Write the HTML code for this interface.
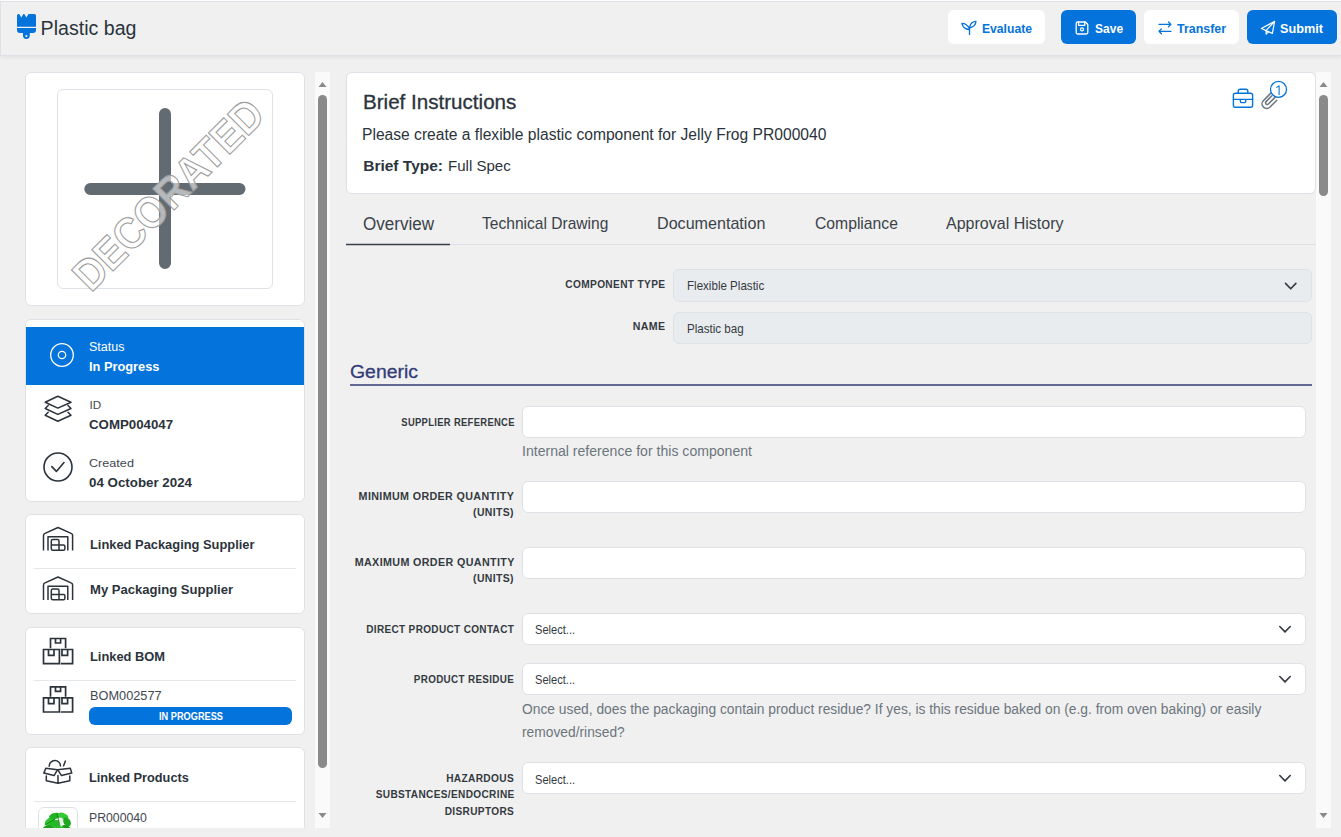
<!DOCTYPE html>
<html><head><meta charset="utf-8"><title>Plastic bag</title>
<style>
html,body{margin:0;padding:0;}
body{width:1341px;height:837px;overflow:hidden;position:relative;background:#f0f0f0;font-family:"Liberation Sans", sans-serif;}
.t{position:absolute;line-height:1;white-space:nowrap;font-family:"Liberation Sans", sans-serif;}
svg{overflow:visible}
</style></head><body>
<div style="position:absolute;left:0px;top:0px;width:1341px;height:1px;box-sizing:border-box;background:#fcfcfd"></div>
<div style="position:absolute;left:0px;top:1px;width:1341px;height:55px;box-sizing:border-box;background:#f0f0f0;border-top:1px solid #dee2e6;border-left:1px solid #dee2e6;border-bottom:1px solid #dee2e6;box-shadow:0 2px 3px rgba(0,0,0,0.05)"></div>
<svg style="position:absolute;left:0;top:0;" width="1341" height="837" viewBox="0 0 1341 837" fill="#0473db" stroke="none" stroke-width="0" stroke-linecap="round" stroke-linejoin="round"><path d="M17 15.6 Q17 14 18.6 14 L19.2 14 L21.3 17.6 L23.4 14 L24.3 14 L26.4 17.6 L28.5 14 L34.4 14 Q36 14 36 15.6 L36 26.7 L17 26.7 Z"/><path fill-rule="evenodd" d="M17 28 L36 28 L36 30 Q36 33 33 33 L29.8 33 L29.8 35.6 A3.4 3.4 0 0 1 23 35.6 L23 33 L20 33 Q17 33 17 30 Z M26.4 34.9 A1.1 1.1 0 1 0 26.4 37.1 A1.1 1.1 0 1 0 26.4 34.9 Z"/></svg>
<div class="t" style="left:40.6px;top:19px;font-size:19.6px;font-weight:400;color:#2b333b;">Plastic bag</div>
<div style="position:absolute;left:948px;top:10px;width:97px;height:34px;box-sizing:border-box;background:#fff;border-radius:6px"></div>
<div style="position:absolute;left:1061px;top:10px;width:75px;height:34px;box-sizing:border-box;background:#0473db;border-radius:6px"></div>
<div style="position:absolute;left:1144px;top:10px;width:95px;height:34px;box-sizing:border-box;background:#fff;border-radius:6px"></div>
<div style="position:absolute;left:1247px;top:10px;width:90px;height:34px;box-sizing:border-box;background:#0473db;border-radius:6px"></div>
<div class="t" style="left:981.8px;top:22px;font-size:13.5px;font-weight:700;color:#0473db;transform:scaleX(0.9);transform-origin:left top;">Evaluate</div>
<div class="t" style="left:1094.7px;top:22px;font-size:13.5px;font-weight:700;color:#fff;transform:scaleX(0.89);transform-origin:left top;">Save</div>
<div class="t" style="left:1177px;top:22px;font-size:13.5px;font-weight:700;color:#0473db;transform:scaleX(0.92);transform-origin:left top;">Transfer</div>
<div class="t" style="left:1280.4px;top:22px;font-size:13.5px;font-weight:700;color:#fff;transform:scaleX(0.94);transform-origin:left top;">Submit</div>
<svg style="position:absolute;left:0;top:0;" width="1341" height="837" viewBox="0 0 1341 837" fill="none" stroke="#0473db" stroke-width="1.3" stroke-linecap="round" stroke-linejoin="round"><path d="M969.5 34.5 L969.5 27.5"/><path d="M969.5 28.5 Q966.5 23.2 962 23.3 Q962.8 29 969.5 29.5"/><path d="M969.8 26.5 Q971 21.5 976 21.3 Q975.6 26.5 970.5 27.5"/></svg>
<svg style="position:absolute;left:0;top:0;" width="1341" height="837" viewBox="0 0 1341 837" fill="none" stroke="#fff" stroke-width="1.3" stroke-linecap="round" stroke-linejoin="round"><path d="M1077.7 22 L1085.5 22 L1087.8 24.5 L1087.8 32.5 Q1087.8 34 1086.3 34 L1077.7 34 Q1076.2 34 1076.2 32.5 L1076.2 23.5 Q1076.2 22 1077.7 22 Z"/><path d="M1078.6 22 L1078.6 25.3 L1084.8 25.3 L1084.8 22"/><circle cx="1082" cy="29.4" r="1.5"/></svg>
<svg style="position:absolute;left:0;top:0;" width="1341" height="837" viewBox="0 0 1341 837" fill="none" stroke="#0473db" stroke-width="1.3" stroke-linecap="round" stroke-linejoin="round"><path d="M1159 24.4 L1170.9 24.4 M1168.5 22 L1170.9 24.4 L1168.5 26.8"/><path d="M1171 31.3 L1159 31.3 M1161.4 28.9 L1159 31.3 L1161.4 33.7"/></svg>
<svg style="position:absolute;left:0;top:0;" width="1341" height="837" viewBox="0 0 1341 837" fill="none" stroke="#fff" stroke-width="1.2" stroke-linecap="round" stroke-linejoin="round"><path d="M1274.6 21.3 L1261.4 28.5 L1266 30.6 L1272.4 33.4 Z M1274.6 21.3 L1266 30.6 L1266.2 34.2 L1268.4 31.8"/></svg>
<div style="position:absolute;left:0;top:72px;width:315px;height:756px;overflow:hidden">
<div style="position:absolute;left:25px;top:0px;width:280px;height:234px;box-sizing:border-box;background:#fff;border:1px solid #dee2e6;border-radius:6px"></div>
<div style="position:absolute;left:25px;top:247px;width:280px;height:183px;box-sizing:border-box;background:#fff;border:1px solid #dee2e6;border-radius:6px"></div>
<div style="position:absolute;left:25px;top:442px;width:280px;height:100px;box-sizing:border-box;background:#fff;border:1px solid #dee2e6;border-radius:6px"></div>
<div style="position:absolute;left:25px;top:555px;width:280px;height:108px;box-sizing:border-box;background:#fff;border:1px solid #dee2e6;border-radius:6px"></div>
<div style="position:absolute;left:25px;top:675px;width:280px;height:200px;box-sizing:border-box;background:#fff;border:1px solid #dee2e6;border-radius:6px"></div>
</div>
<div style="position:absolute;left:57px;top:89px;width:216px;height:200px;box-sizing:border-box;border:1px solid #dee2e6;border-radius:6px;background:#fff"></div>
<svg style="position:absolute;left:0;top:0;" width="1341" height="837" viewBox="0 0 1341 837" fill="none" stroke="#626a72" stroke-width="12" stroke-linecap="round" stroke-linejoin="round"><path d="M165 114 L165 263 M90.3 189 L239.5 189"/></svg>
<div style="position:absolute;left:57px;top:89px;width:216px;height:200px;border-radius:6px"><div style="position:absolute;left:108px;top:100px;width:0;height:0"><div style="position:absolute;left:-200px;top:-40px;width:400px;height:80px;line-height:80px;text-align:center;font-family:'Liberation Sans',sans-serif;font-weight:700;font-size:44px;color:rgba(255,255,255,0.55);-webkit-text-stroke:1.1px #9c9c9c;transform:translate(3.4px,5.6px) rotate(-45deg) scaleX(0.905);white-space:nowrap">DECORATED</div></div></div>
<div style="position:absolute;left:26px;top:327px;width:278px;height:58px;box-sizing:border-box;background:#0473db"></div>
<svg style="position:absolute;left:0;top:0;" width="1341" height="837" viewBox="0 0 1341 837" fill="none" stroke="#fff" stroke-width="1.3" stroke-linecap="round" stroke-linejoin="round"><circle cx="62" cy="355" r="11.3"/><circle cx="62" cy="355" r="3.7"/></svg>
<div class="t" style="left:89px;top:341px;font-size:12.5px;font-weight:400;color:#fff;">Status</div>
<div class="t" style="left:89px;top:360px;font-size:13px;font-weight:700;color:#fff;transform:scaleX(0.985);transform-origin:left top;">In Progress</div>
<svg style="position:absolute;left:0;top:0;" width="1341" height="837" viewBox="0 0 1341 837" fill="none" stroke="#2b333b" stroke-width="1.5" stroke-linecap="round" stroke-linejoin="round"><path d="M57.8 396.3 L71 402.2 L57.8 408.1 L45.2 402.2 Z"/><path d="M48.2 405.4 L45.2 408.5 L57.8 414.4 L71 408.5 L68 405.4"/><path d="M48.2 412.2 L45.2 415.3 L57.8 421.2 L71 415.3 L68 412.2"/></svg>
<div class="t" style="left:89.4px;top:399px;font-size:11.7px;font-weight:400;color:#3f474f;">ID</div>
<div class="t" style="left:89.4px;top:418px;font-size:13px;font-weight:700;color:#2b333b;transform:scaleX(1.02);transform-origin:left top;">COMP004047</div>
<svg style="position:absolute;left:0;top:0;" width="1341" height="837" viewBox="0 0 1341 837" fill="none" stroke="#2b333b" stroke-width="1.6" stroke-linecap="round" stroke-linejoin="round"><circle cx="58" cy="467" r="14"/><path d="M51.8 466.6 L56.4 471.4 L64 462.5"/></svg>
<div class="t" style="left:89px;top:457px;font-size:11.7px;font-weight:400;color:#3f474f;transform:scaleX(1.08);transform-origin:left top;">Created</div>
<div class="t" style="left:89px;top:476px;font-size:13px;font-weight:700;color:#2b333b;transform:scaleX(1.025);transform-origin:left top;">04 October 2024</div>
<svg style="position:absolute;left:0;top:0;" width="1341" height="837" viewBox="0 0 1341 837" fill="none" stroke="#2b333b" stroke-width="1.5" stroke-linecap="butt" stroke-linejoin="round"><path d="M43.5 550.6 L43.5 535.5 Q43.5 534 45 533.4 L58 527.5 L71.1 533.4 Q72.6 534 72.6 535.5 L72.6 550.6"/><path d="M48 550.6 L48 536.8 L67.8 536.8 L67.8 550.6"/><path d="M51.3 545 L51.3 541 Q51.3 539.5 52.8 539.5 L57.5 539.5 Q59 539.5 59 541 L59 550.3 L52.8 550.3 Q51.3 550.3 51.3 548.8 Z M51.3 545 L63.4 545 Q64.9 545 64.9 546.5 L64.9 548.8 Q64.9 550.3 63.4 550.3 L59 550.3"/><path d="M43.5 600.1 L43.5 585.0 Q43.5 583.5 45 582.9 L58 577.0 L71.1 582.9 Q72.6 583.5 72.6 585.0 L72.6 600.1"/><path d="M48 600.1 L48 586.3 L67.8 586.3 L67.8 600.1"/><path d="M51.3 594.5 L51.3 590.5 Q51.3 589.0 52.8 589.0 L57.5 589.0 Q59 589.0 59 590.5 L59 599.8 L52.8 599.8 Q51.3 599.8 51.3 598.3 Z M51.3 594.5 L63.4 594.5 Q64.9 594.5 64.9 596.0 L64.9 598.3 Q64.9 599.8 63.4 599.8 L59 599.8"/></svg>
<div class="t" style="left:89.5px;top:538px;font-size:13px;font-weight:700;color:#2b333b;transform:scaleX(0.99);transform-origin:left top;">Linked Packaging Supplier</div>
<div style="position:absolute;left:34px;top:568px;width:262px;height:1px;box-sizing:border-box;background:#e5e8eb"></div>
<div class="t" style="left:89.5px;top:583px;font-size:13px;font-weight:700;color:#2b333b;transform:scaleX(1.005);transform-origin:left top;">My Packaging Supplier</div>
<svg style="position:absolute;left:0;top:0" width="1341" height="837" fill="none" stroke="#2b333b" stroke-width="1.7" stroke-linecap="square" stroke-linejoin="miter"><path d="M50.5 647.5 L50.5 638.5 L65.6 638.5 L65.6 647.5 M55.5 638.5 L55.5 643 L60.6 643 L60.6 638.5"/><path d="M43.5 649.5 L59.4 649.5 L59.4 663.6 L43.5 663.6 Z M48.5 649.5 L48.5 655.3 L54 655.3 L54 649.5"/><path d="M61.6 649.5 L72.6 649.5 L72.6 663.6 L61.6 663.6 M62 649.5 L62 655.3 L67.6 655.3 L67.6 649.5"/><path d="M50.5 695.9 L50.5 686.9 L65.6 686.9 L65.6 695.9 M55.5 686.9 L55.5 691.4 L60.6 691.4 L60.6 686.9"/><path d="M43.5 697.9 L59.4 697.9 L59.4 712.0 L43.5 712.0 Z M48.5 697.9 L48.5 703.6999999999999 L54 703.6999999999999 L54 697.9"/><path d="M61.6 697.9 L72.6 697.9 L72.6 712.0 L61.6 712.0 M62 697.9 L62 703.6999999999999 L67.6 703.6999999999999 L67.6 697.9"/></svg>
<div class="t" style="left:89.5px;top:650px;font-size:13px;font-weight:700;color:#2b333b;transform:scaleX(0.99);transform-origin:left top;">Linked BOM</div>
<div style="position:absolute;left:34px;top:680px;width:262px;height:1px;box-sizing:border-box;background:#e5e8eb"></div>
<div class="t" style="left:89.5px;top:690px;font-size:12.5px;font-weight:400;color:#3f474f;transform:scaleX(1.02);transform-origin:left top;">BOM002577</div>
<div style="position:absolute;left:89px;top:707px;width:203px;height:18px;box-sizing:border-box;background:#0473db;border-radius:6px"></div>
<div class="t" style="left:-109.4px;width:600px;text-align:center;top:712px;font-size:10.2px;font-weight:700;color:#fff;transform:scaleX(0.905);transform-origin:center top;">IN PROGRESS</div>
<svg style="position:absolute;left:0;top:0;" width="1341" height="837" viewBox="0 0 1341 837" fill="none" stroke="#2b333b" stroke-width="1.5" stroke-linecap="round" stroke-linejoin="round"><path d="M49.2 766.3 A5.6 5.6 0 0 1 60.5 766"/><path d="M63.6 765.8 L65.4 761.1"/><path d="M45.8 768.2 L57.6 769.7 L54.1 775.6 L43.8 773.1 Z"/><path d="M57.6 769.7 L70.3 768.2 L71.8 773.1 L61.5 775.6 Z"/><path d="M46.3 776 L46.3 780.7 L58 783.2 L69.8 780.7 L69.8 776 M58 775.6 L58 783.2"/></svg>
<div class="t" style="left:89.3px;top:771px;font-size:13px;font-weight:700;color:#2b333b;transform:scaleX(0.98);transform-origin:left top;">Linked Products</div>
<div style="position:absolute;left:34px;top:801px;width:262px;height:1px;box-sizing:border-box;background:#e5e8eb"></div>
<div class="t" style="left:89.3px;top:812px;font-size:12.5px;font-weight:400;color:#3f474f;transform:scaleX(0.98);transform-origin:left top;">PR000040</div>
<div style="position:absolute;left:0;top:0;width:315px;height:828px;overflow:hidden;pointer-events:none">
<div style="position:absolute;left:38px;top:807px;width:40px;height:40px;box-sizing:border-box;border:1px solid #dee2e6;border-radius:6px;background:#fff"></div>
<svg style="position:absolute;left:0;top:0;" width="1341" height="837" viewBox="0 0 1341 837" fill="none" stroke="none" stroke-width="0" stroke-linecap="round" stroke-linejoin="round"><g transform="translate(57 822)"><ellipse cx="-9" cy="6" rx="7" ry="3" fill="#1e9e1e" transform="rotate(-25 -9 6)"/><ellipse cx="-7" cy="-1" rx="6" ry="3.2" fill="#2cc52c" transform="rotate(-35 -7 -1)"/><ellipse cx="-2" cy="-6" rx="6" ry="3" fill="#22b422" transform="rotate(-10 -2 -6)"/><ellipse cx="6" cy="-6" rx="5.5" ry="3" fill="#35c935" transform="rotate(20 6 -6)"/><ellipse cx="10" cy="0" rx="5" ry="3.5" fill="#1fa81f" transform="rotate(60 10 0)"/><ellipse cx="-1" cy="2" rx="6" ry="4" fill="#27b827"/><ellipse cx="10" cy="7" rx="6" ry="3" fill="#189618" transform="rotate(30 10 7)"/><ellipse cx="3" cy="7" rx="5" ry="3" fill="#2bbf2b"/><ellipse cx="4" cy="0" rx="2.2" ry="4.5" fill="#e6ece6"/><path d="M-12 3 L-2 -3 M0 -8 L3 4" stroke="#0c7a0c" stroke-width="0.8"/></g></svg>
</div>
<div style="position:absolute;left:315px;top:72px;width:15px;height:756px;box-sizing:border-box;background:#fafafa"></div>
<div style="position:absolute;left:318px;top:95px;width:9px;height:673px;box-sizing:border-box;background:#8a8a8a;border-radius:5px"></div>
<svg style="position:absolute;left:0;top:0;" width="1341" height="837" viewBox="0 0 1341 837" fill="#8a8a8a" stroke="none" stroke-width="0" stroke-linecap="round" stroke-linejoin="round"><path d="M318.5 87 L322.5 82 L326.5 87 Z"/><path d="M318.5 813 L322.5 818 L326.5 813 Z"/></svg>
<div style="position:absolute;left:346px;top:72px;width:970px;height:122px;box-sizing:border-box;background:#fff;border:1px solid #dee2e6;border-radius:6px"></div>
<div class="t" style="left:362.7px;top:93px;font-size:19.5px;font-weight:400;color:#2b333b;transform:scaleX(1.056);transform-origin:left top;-webkit-text-stroke:0.3px #2b333b;">Brief Instructions</div>
<div class="t" style="left:362.4px;top:126.5px;font-size:15.8px;font-weight:400;color:#2b333b;transform:scaleX(0.9885);transform-origin:left top;">Please create a flexible plastic component for Jelly Frog PR000040</div>
<div class="t" style="left:363.2px;top:158px;font-size:15.5px;font-weight:700;color:#2b333b;">Brief Type:</div>
<div class="t" style="left:448px;top:158px;font-size:15.5px;font-weight:400;color:#2b333b;transform:scaleX(0.97);transform-origin:left top;">Full Spec</div>
<svg style="position:absolute;left:0;top:0;" width="1341" height="837" viewBox="0 0 1341 837" fill="none" stroke="#0473db" stroke-width="1.4" stroke-linecap="round" stroke-linejoin="round"><rect x="1233.4" y="93.2" width="19.2" height="14" rx="2"/><path d="M1238.2 93.2 L1238.2 91.3 Q1238.2 89.3 1240.2 89.3 L1245.8 89.3 Q1247.8 89.3 1247.8 91.3 L1247.8 93.2"/><path d="M1233.4 99.4 L1252.6 99.4 M1240.4 99.4 L1240.4 101.6 Q1240.4 102.6 1241.4 102.6 L1244.7 102.6 Q1245.7 102.6 1245.7 101.6 L1245.7 99.4"/></svg>
<svg style="position:absolute;left:0;top:0;" width="1341" height="837" viewBox="0 0 1341 837" fill="none" stroke="#6c757d" stroke-width="1.5" stroke-linecap="round" stroke-linejoin="round"><path d="M1276.8 100.2 L1269.8 107.2 A4.6 4.6 0 0 1 1263.3 100.7 L1270.6 93.4"/><path d="M1274.8 97.6 L1268.4 104 A1.7 1.7 0 0 1 1266 101.6 L1271.8 95.8"/></svg>
<svg style="position:absolute;left:0;top:0;" width="1341" height="837" viewBox="0 0 1341 837" fill="none" stroke="#0473db" stroke-width="1.3" stroke-linecap="round" stroke-linejoin="round"><circle cx="1278.5" cy="89.4" r="8" fill="#fff"/></svg>
<svg style="position:absolute;left:0;top:0;" width="1341" height="837" viewBox="0 0 1341 837" fill="none" stroke="#0473db" stroke-width="1.1" stroke-linecap="butt" stroke-linejoin="round"><path d="M1276.3 87.6 L1279.1 85.9 L1279.1 95"/></svg>
<div style="position:absolute;left:1316px;top:72px;width:15px;height:756px;box-sizing:border-box;background:#fafafa"></div>
<div style="position:absolute;left:1319px;top:95px;width:9px;height:101px;box-sizing:border-box;background:#8a8a8a;border-radius:5px"></div>
<svg style="position:absolute;left:0;top:0;" width="1341" height="837" viewBox="0 0 1341 837" fill="#8a8a8a" stroke="none" stroke-width="0" stroke-linecap="round" stroke-linejoin="round"><path d="M1319.5 87 L1323.5 82 L1327.5 87 Z"/><path d="M1319.5 813 L1323.5 818 L1327.5 813 Z"/></svg>
<div style="position:absolute;left:450px;top:244px;width:866px;height:1px;box-sizing:border-box;background:#dee2e6"></div>
<svg style="position:absolute;left:0;top:0;" width="1341" height="837" viewBox="0 0 1341 837" fill="none" stroke="#36404a" stroke-width="1.5" stroke-linecap="butt" stroke-linejoin="round"><path d="M346 244.5 L450 244.5"/></svg>
<div class="t" style="left:362.6px;top:216px;font-size:17.5px;font-weight:400;color:#3b4249;transform:scaleX(0.975);transform-origin:left top;">Overview</div>
<div class="t" style="left:482px;top:215px;font-size:16.2px;font-weight:400;color:#3b4249;transform:scaleX(0.962);transform-origin:left top;">Technical Drawing</div>
<div class="t" style="left:657.4px;top:215px;font-size:16.2px;font-weight:400;color:#3b4249;transform:scaleX(0.995);transform-origin:left top;">Documentation</div>
<div class="t" style="left:814.5px;top:215px;font-size:16.2px;font-weight:400;color:#3b4249;transform:scaleX(0.97);transform-origin:left top;">Compliance</div>
<div class="t" style="left:946px;top:215px;font-size:16.2px;font-weight:400;color:#3b4249;transform:scaleX(0.99);transform-origin:left top;">Approval History</div>
<div style="position:absolute;left:673px;top:269px;width:639px;height:33px;box-sizing:border-box;background:#e9ecef;border:1px solid #dee2e6;border-radius:6px"></div>
<div style="position:absolute;left:673px;top:312px;width:639px;height:32px;box-sizing:border-box;background:#e9ecef;border:1px solid #dee2e6;border-radius:6px"></div>
<div class="t" style="right:675.66px;text-align:right;top:278.5px;font-size:11.8px;font-weight:700;color:#343a40;letter-spacing:0.4px;transform:scaleX(0.8596);transform-origin:right top;">COMPONENT TYPE</div>
<div class="t" style="right:675.64px;text-align:right;top:321px;font-size:11.8px;font-weight:700;color:#343a40;letter-spacing:0.4px;transform:scaleX(0.8989);transform-origin:right top;">NAME</div>
<div class="t" style="left:686.5px;top:280px;font-size:12.2px;font-weight:400;color:#343a40;transform:scaleX(0.95);transform-origin:left top;">Flexible Plastic</div>
<div class="t" style="left:686.5px;top:323px;font-size:12.2px;font-weight:400;color:#343a40;transform:scaleX(0.95);transform-origin:left top;">Plastic bag</div>
<svg style="position:absolute;left:0;top:0;" width="1341" height="837" viewBox="0 0 1341 837" fill="none" stroke="#343a40" stroke-width="1.6" stroke-linecap="round" stroke-linejoin="round"><path d="M1285.5 283.4 L1290.7 288.8 L1295.9 283.4"/></svg>
<div class="t" style="left:350.0px;top:362px;font-size:19.2px;font-weight:400;color:#323c78;transform:scaleX(1.012);transform-origin:left top;-webkit-text-stroke:0.3px #323c78;">Generic</div>
<svg style="position:absolute;left:0;top:0;" width="1341" height="837" viewBox="0 0 1341 837" fill="none" stroke="#323c78" stroke-width="1.4" stroke-linecap="butt" stroke-linejoin="round"><path d="M350 385 L1312 385"/></svg>
<div style="position:absolute;left:522px;top:406px;width:784px;height:32px;box-sizing:border-box;background:#fff;border:1px solid #dee2e6;border-radius:6px"></div>
<div class="t" style="right:826.67px;text-align:right;top:416.5px;font-size:11.5px;font-weight:700;color:#343a40;letter-spacing:0.4px;transform:scaleX(0.8178);transform-origin:right top;">SUPPLIER REFERENCE</div>
<div class="t" style="left:522px;top:445px;font-size:13.8px;font-weight:400;color:#6c757d;transform:scaleX(1.02);transform-origin:left top;">Internal reference for this component</div>
<div style="position:absolute;left:522px;top:481px;width:784px;height:32px;box-sizing:border-box;background:#fff;border:1px solid #dee2e6;border-radius:6px"></div>
<div class="t" style="right:826.63px;text-align:right;top:491.3px;font-size:11.5px;font-weight:700;color:#343a40;letter-spacing:0.4px;transform:scaleX(0.9307);transform-origin:right top;">MINIMUM ORDER QUANTITY</div>
<div class="t" style="right:826.64px;text-align:right;top:507px;font-size:11.5px;font-weight:700;color:#343a40;letter-spacing:0.4px;transform:scaleX(0.9083);transform-origin:right top;">(UNITS)</div>
<div style="position:absolute;left:522px;top:547px;width:784px;height:32px;box-sizing:border-box;background:#fff;border:1px solid #dee2e6;border-radius:6px"></div>
<div class="t" style="right:826.63px;text-align:right;top:557.3px;font-size:11.5px;font-weight:700;color:#343a40;letter-spacing:0.4px;transform:scaleX(0.9319);transform-origin:right top;">MAXIMUM ORDER QUANTITY</div>
<div class="t" style="right:826.64px;text-align:right;top:573px;font-size:11.5px;font-weight:700;color:#343a40;letter-spacing:0.4px;transform:scaleX(0.9083);transform-origin:right top;">(UNITS)</div>
<div style="position:absolute;left:522px;top:613px;width:784px;height:32px;box-sizing:border-box;background:#fff;border:1px solid #dee2e6;border-radius:6px"></div>
<div class="t" style="right:826.65px;text-align:right;top:623.5px;font-size:11.5px;font-weight:700;color:#343a40;letter-spacing:0.4px;transform:scaleX(0.8697);transform-origin:right top;">DIRECT PRODUCT CONTACT</div>
<div class="t" style="left:535px;top:624px;font-size:12.2px;font-weight:400;color:#343a40;transform:scaleX(0.91);transform-origin:left top;">Select...</div>
<div style="position:absolute;left:522px;top:663px;width:784px;height:32px;box-sizing:border-box;background:#fff;border:1px solid #dee2e6;border-radius:6px"></div>
<div class="t" style="right:826.66px;text-align:right;top:673.5px;font-size:11.5px;font-weight:700;color:#343a40;letter-spacing:0.4px;transform:scaleX(0.8568);transform-origin:right top;">PRODUCT RESIDUE</div>
<div class="t" style="left:535px;top:674px;font-size:12.2px;font-weight:400;color:#343a40;transform:scaleX(0.91);transform-origin:left top;">Select...</div>
<div class="t" style="left:522px;top:703px;font-size:13.8px;font-weight:400;color:#6c757d;">Once used, does the packaging contain product residue? If yes, is this residue baked on (e.g. from oven baking) or easily</div>
<div class="t" style="left:522px;top:726px;font-size:13.8px;font-weight:400;color:#6c757d;">removed/rinsed?</div>
<div style="position:absolute;left:522px;top:762px;width:784px;height:32px;box-sizing:border-box;background:#fff;border:1px solid #dee2e6;border-radius:6px"></div>
<div class="t" style="right:826.65px;text-align:right;top:772.5px;font-size:11.5px;font-weight:700;color:#343a40;letter-spacing:0.4px;transform:scaleX(0.8816);transform-origin:right top;">HAZARDOUS</div>
<div class="t" style="right:826.65px;text-align:right;top:789.3px;font-size:11.5px;font-weight:700;color:#343a40;letter-spacing:0.4px;transform:scaleX(0.8758);transform-origin:right top;">SUBSTANCES/ENDOCRINE</div>
<div class="t" style="right:826.65px;text-align:right;top:806px;font-size:11.5px;font-weight:700;color:#343a40;letter-spacing:0.4px;transform:scaleX(0.878);transform-origin:right top;">DISRUPTORS</div>
<div class="t" style="left:535px;top:773.5px;font-size:12.2px;font-weight:400;color:#343a40;transform:scaleX(0.91);transform-origin:left top;">Select...</div>
<svg style="position:absolute;left:0;top:0;" width="1341" height="837" viewBox="0 0 1341 837" fill="none" stroke="#343a40" stroke-width="1.6" stroke-linecap="round" stroke-linejoin="round"><path d="M1279.8 626.5 L1285 631.9 L1290.2 626.5"/><path d="M1279.8 676.5 L1285 681.9 L1290.2 676.5"/><path d="M1279.8 775.5 L1285 780.9 L1290.2 775.5"/></svg>
</body></html>
